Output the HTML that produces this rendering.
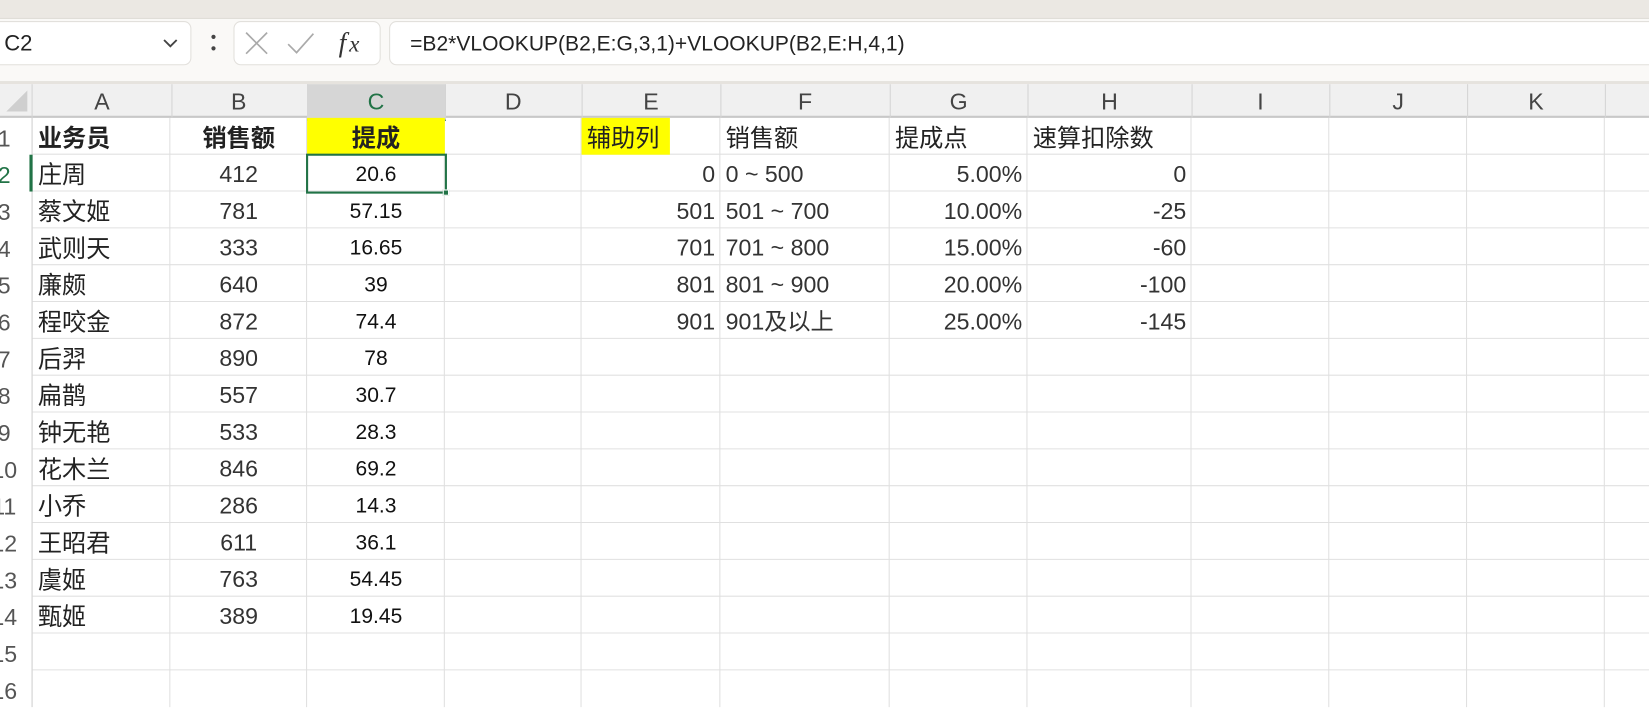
<!DOCTYPE html>
<html><head><meta charset="utf-8"><style>
html,body{margin:0;padding:0;width:1649px;height:703px;overflow:hidden;background:#fff}
#w{position:absolute;left:0;top:0;width:1568px;height:668px;transform:scale(1.05166,1.0524);transform-origin:0 0;font-family:"Liberation Sans","Noto Sans CJK SC",sans-serif;color:#222}
.a{position:absolute;box-sizing:border-box}
.c{position:absolute;box-sizing:border-box;height:35px;line-height:38px;font-size:23px;white-space:nowrap;overflow:visible;padding:0 5px}
.n{font-size:22px;color:#333}
.v{font-size:20px;color:#111}
.r{text-align:right}.m{text-align:center}.b{font-weight:bold}
.hc{position:absolute;top:80px;height:32px;line-height:34px;text-align:center;font-size:22px;color:#444;border-right:1px solid #d4d4d4}
.rh{position:absolute;left:-22px;width:52px;height:35px;line-height:40px;text-align:center;font-size:22px;color:#555}
</style></head><body><div id="w">
<div class="a" style="left:0;top:0;width:1568px;height:18px;background:#ebe8e3;border-bottom:1px solid #dedbd5"></div>
<div class="a" style="left:0;top:18px;width:1568px;height:62px;background:#faf9f7"></div>
<div class="a" style="left:-10px;top:20px;width:192px;height:42px;background:#fff;border:1px solid #e2e0dc;border-radius:7px"></div>
<div class="a" style="left:4px;top:20px;height:42px;line-height:44px;font-size:21px;color:#222">C2</div>
<svg class="a" style="left:153px;top:35px" width="18" height="12"><path d="M3 3 L9 9 L15 3" fill="none" stroke="#444" stroke-width="1.8"/></svg>
<div class="a" style="left:201px;top:33px;width:4px;height:4px;background:#444;border-radius:2px"></div>
<div class="a" style="left:201px;top:44px;width:4px;height:4px;background:#444;border-radius:2px"></div>
<div class="a" style="left:222px;top:20px;width:140px;height:42px;background:#fff;border:1px solid #e2e0dc;border-radius:7px"></div>
<svg class="a" style="left:230px;top:28px" width="130" height="28"><path d="M4 3 L24 23 M24 3 L4 23" stroke="#aaa" stroke-width="1.6"/><path d="M44 14 L52 22 L68 4" fill="none" stroke="#aaa" stroke-width="1.6"/><text x="92" y="21" font-family="Liberation Serif,serif" font-style="italic" font-size="26" fill="#333">f</text><text x="102" y="21" font-family="Liberation Serif,serif" font-style="italic" font-size="22" fill="#333">x</text></svg>
<div class="a" style="left:370px;top:20px;width:1210px;height:42px;background:#fff;border:1px solid #e2e0dc;border-radius:7px"></div>
<div class="a" style="left:390px;top:20px;height:42px;line-height:44px;font-size:20px;color:#222">=B2*VLOOKUP(B2,E:G,3,1)+VLOOKUP(B2,E:H,4,1)</div>
<div class="a" style="left:0;top:77px;width:1568px;height:3px;background:#e6e3de"></div>
<div class="a" style="left:0;top:80px;width:1568px;height:32px;background:#f0f0f0;border-bottom:2px solid #c8c8c8"></div>
<svg class="a" style="left:4px;top:84px" width="24" height="24"><path d="M22 2 L22 22 L2 22 Z" fill="#cfcfcf"/></svg>
<div class="hc" style="left:30px;width:132px;border-left:1px solid #d4d4d4">A</div>
<div class="hc" style="left:162px;width:130px">B</div>
<div class="hc" style="left:292px;width:131px;background:#d6d6d6;color:#217346;border-bottom:2px solid #217346;height:33px">C</div>
<div class="hc" style="left:423px;width:130px">D</div>
<div class="hc" style="left:553px;width:132px">E</div>
<div class="hc" style="left:685px;width:161px">F</div>
<div class="hc" style="left:846px;width:131px">G</div>
<div class="hc" style="left:977px;width:156px">H</div>
<div class="hc" style="left:1133px;width:131px">I</div>
<div class="hc" style="left:1264px;width:131px">J</div>
<div class="hc" style="left:1395px;width:131px">K</div>
<div class="hc" style="left:1526px;width:60px"></div>
<svg class="a" style="left:0;top:112px" width="1568" height="560">
<g stroke="#e0e0e0" stroke-width="1">
<line x1="30.5" y1="0" x2="30.5" y2="560" stroke="#cfcfcf"/>
<line x1="161.5" y1="0" x2="161.5" y2="560"/><line x1="291.5" y1="0" x2="291.5" y2="560"/><line x1="422.5" y1="0" x2="422.5" y2="560"/><line x1="552.5" y1="0" x2="552.5" y2="560"/><line x1="684.5" y1="0" x2="684.5" y2="560"/><line x1="845.5" y1="0" x2="845.5" y2="560"/><line x1="976.5" y1="0" x2="976.5" y2="560"/><line x1="1132.5" y1="0" x2="1132.5" y2="560"/><line x1="1263.5" y1="0" x2="1263.5" y2="560"/><line x1="1394.5" y1="0" x2="1394.5" y2="560"/><line x1="1525.5" y1="0" x2="1525.5" y2="560"/>
<line x1="31" y1="34.5" x2="1568" y2="34.5"/><line x1="31" y1="69.5" x2="1568" y2="69.5"/><line x1="31" y1="104.5" x2="1568" y2="104.5"/><line x1="31" y1="139.5" x2="1568" y2="139.5"/><line x1="31" y1="174.5" x2="1568" y2="174.5"/><line x1="31" y1="209.5" x2="1568" y2="209.5"/><line x1="31" y1="244.5" x2="1568" y2="244.5"/><line x1="31" y1="279.5" x2="1568" y2="279.5"/><line x1="31" y1="314.5" x2="1568" y2="314.5"/><line x1="31" y1="349.5" x2="1568" y2="349.5"/><line x1="31" y1="384.5" x2="1568" y2="384.5"/><line x1="31" y1="419.5" x2="1568" y2="419.5"/><line x1="31" y1="454.5" x2="1568" y2="454.5"/><line x1="31" y1="489.5" x2="1568" y2="489.5"/><line x1="31" y1="524.5" x2="1568" y2="524.5"/>
</g></svg>
<div class="a" style="left:292px;top:112px;width:131px;height:35px;background:#ffff00"></div>
<div class="a" style="left:553px;top:112px;width:84px;height:35px;background:#ffff00"></div>
<div class="a" style="left:28px;top:147px;width:3px;height:35px;background:#217346"></div>
<div class="rh" style="top:112px">1</div><div class="rh" style="top:147px;color:#217346">2</div><div class="rh" style="top:182px">3</div><div class="rh" style="top:217px">4</div><div class="rh" style="top:252px">5</div><div class="rh" style="top:287px">6</div><div class="rh" style="top:322px">7</div><div class="rh" style="top:357px">8</div><div class="rh" style="top:392px">9</div><div class="rh" style="top:427px">10</div><div class="rh" style="top:462px">11</div><div class="rh" style="top:497px">12</div><div class="rh" style="top:532px">13</div><div class="rh" style="top:567px">14</div><div class="rh" style="top:602px">15</div><div class="rh" style="top:637px">16</div>

<div class="c b" style="left:31px;top:112px">业务员</div>
<div class="c b m" style="left:162px;top:112px;width:130px">销售额</div>
<div class="c b m" style="left:292px;top:112px;width:131px">提成</div>

<div class="c" style="left:31px;top:147px">庄周</div><div class="c n m" style="left:162px;top:147px;width:130px">412</div><div class="c v m" style="left:292px;top:147px;width:131px">20.6</div>
<div class="c" style="left:31px;top:182px">蔡文姬</div><div class="c n m" style="left:162px;top:182px;width:130px">781</div><div class="c v m" style="left:292px;top:182px;width:131px">57.15</div>
<div class="c" style="left:31px;top:217px">武则天</div><div class="c n m" style="left:162px;top:217px;width:130px">333</div><div class="c v m" style="left:292px;top:217px;width:131px">16.65</div>
<div class="c" style="left:31px;top:252px">廉颇</div><div class="c n m" style="left:162px;top:252px;width:130px">640</div><div class="c v m" style="left:292px;top:252px;width:131px">39</div>
<div class="c" style="left:31px;top:287px">程咬金</div><div class="c n m" style="left:162px;top:287px;width:130px">872</div><div class="c v m" style="left:292px;top:287px;width:131px">74.4</div>
<div class="c" style="left:31px;top:322px">后羿</div><div class="c n m" style="left:162px;top:322px;width:130px">890</div><div class="c v m" style="left:292px;top:322px;width:131px">78</div>
<div class="c" style="left:31px;top:357px">扁鹊</div><div class="c n m" style="left:162px;top:357px;width:130px">557</div><div class="c v m" style="left:292px;top:357px;width:131px">30.7</div>
<div class="c" style="left:31px;top:392px">钟无艳</div><div class="c n m" style="left:162px;top:392px;width:130px">533</div><div class="c v m" style="left:292px;top:392px;width:131px">28.3</div>
<div class="c" style="left:31px;top:427px">花木兰</div><div class="c n m" style="left:162px;top:427px;width:130px">846</div><div class="c v m" style="left:292px;top:427px;width:131px">69.2</div>
<div class="c" style="left:31px;top:462px">小乔</div><div class="c n m" style="left:162px;top:462px;width:130px">286</div><div class="c v m" style="left:292px;top:462px;width:131px">14.3</div>
<div class="c" style="left:31px;top:497px">王昭君</div><div class="c n m" style="left:162px;top:497px;width:130px">611</div><div class="c v m" style="left:292px;top:497px;width:131px">36.1</div>
<div class="c" style="left:31px;top:532px">虞姬</div><div class="c n m" style="left:162px;top:532px;width:130px">763</div><div class="c v m" style="left:292px;top:532px;width:131px">54.45</div>
<div class="c" style="left:31px;top:567px">甄姬</div><div class="c n m" style="left:162px;top:567px;width:130px">389</div><div class="c v m" style="left:292px;top:567px;width:131px">19.45</div>

<div class="a" style="left:291px;top:146px;width:134px;height:38px;border:2px solid #217346"></div>
<div class="a" style="left:421px;top:180px;width:6px;height:6px;background:#217346;border:1px solid #fff"></div>

<div class="c" style="left:553px;top:112px">辅助列</div>
<div class="c" style="left:685px;top:112px">销售额</div>
<div class="c" style="left:846px;top:112px">提成点</div>
<div class="c" style="left:977px;top:112px">速算扣除数</div>
<div class="c n r" style="left:553px;top:147px;width:132px">0</div><div class="c n" style="left:685px;top:147px">0 ~ 500</div><div class="c n r" style="left:846px;top:147px;width:131px">5.00%</div><div class="c n r" style="left:977px;top:147px;width:156px">0</div>
<div class="c n r" style="left:553px;top:182px;width:132px">501</div><div class="c n" style="left:685px;top:182px">501 ~ 700</div><div class="c n r" style="left:846px;top:182px;width:131px">10.00%</div><div class="c n r" style="left:977px;top:182px;width:156px">-25</div>
<div class="c n r" style="left:553px;top:217px;width:132px">701</div><div class="c n" style="left:685px;top:217px">701 ~ 800</div><div class="c n r" style="left:846px;top:217px;width:131px">15.00%</div><div class="c n r" style="left:977px;top:217px;width:156px">-60</div>
<div class="c n r" style="left:553px;top:252px;width:132px">801</div><div class="c n" style="left:685px;top:252px">801 ~ 900</div><div class="c n r" style="left:846px;top:252px;width:131px">20.00%</div><div class="c n r" style="left:977px;top:252px;width:156px">-100</div>
<div class="c n r" style="left:553px;top:287px;width:132px">901</div><div class="c n" style="left:685px;top:287px">901及以上</div><div class="c n r" style="left:846px;top:287px;width:131px">25.00%</div><div class="c n r" style="left:977px;top:287px;width:156px">-145</div>
</div></body></html>
